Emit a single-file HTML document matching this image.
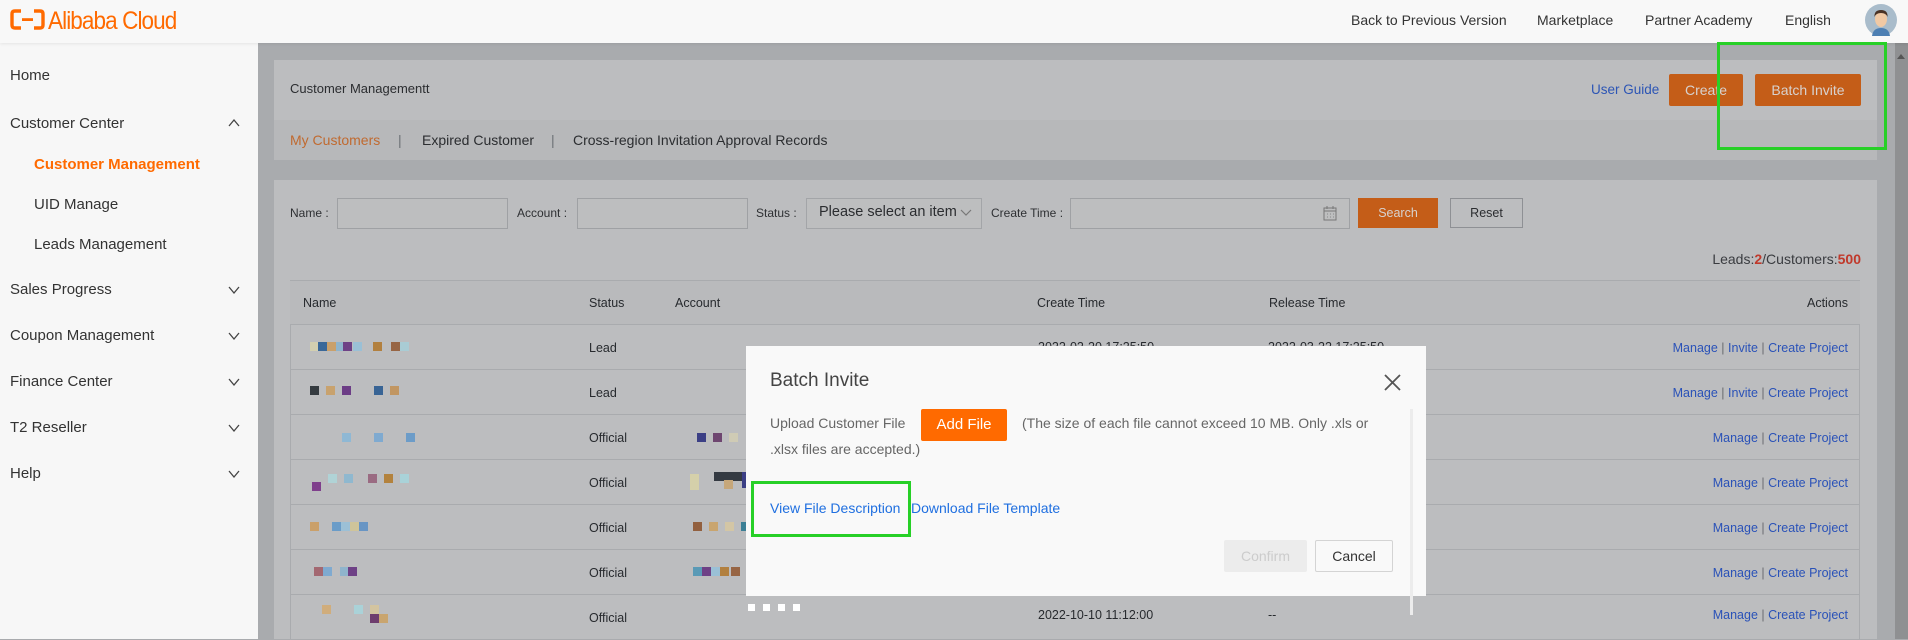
<!DOCTYPE html>
<html><head><meta charset="utf-8">
<style>
*{margin:0;padding:0;box-sizing:border-box}
body{width:1908px;height:639px;overflow:hidden;position:relative;font-family:"Liberation Sans",Arial,sans-serif;background:#a9abae;color:#2b2d30}
.abs{position:absolute}
.hdr{left:0;top:0;width:1908px;height:43px;background:#f8f8f8;box-shadow:0 1px 3px rgba(0,0,0,.08);z-index:2}
.nav{top:12px;font-size:14px;color:#333}
.side{left:0;top:43px;width:258px;height:596px;background:#f7f7f7}
.si{left:10px;font-size:15px;color:#333;line-height:18px}
.sub{left:34px}
.chev{left:228px;width:12px;height:8px}
.panel{background:#bcbdbf}
.t13{font-size:13px}
.inp{background:#bdbebf;border:1px solid #9fa1a4;height:31px;top:198px}
.lbl{top:206px;font-size:12px;color:#2e3033}
.btn{background:#c45d18;color:#d7d2cf;font-size:14px;text-align:center;border-radius:2px}
.row{left:290px;width:1570px;height:45px;border-bottom:1px solid #a9abae}
.cell{font-size:12.5px;color:#272a2e;top:16px}
.act{right:12px;top:16px;font-size:12.5px;color:#2a52b8}
.act span{color:#6a6c70}
.px{position:absolute;width:9px;height:9px}
.modal{left:746px;top:346px;width:680px;height:250px;background:#f9f9f9;z-index:5}
.green{border:3px solid #27d027;z-index:6}
</style></head><body>

<div class="abs hdr">
  <svg class="abs" style="left:10px;top:9px" width="35" height="21" viewBox="0 0 35 21">
    <path d="M11 2H5Q2 2 2 5V16Q2 19 5 19H11" fill="none" stroke="#ff6a00" stroke-width="3.4"/>
    <path d="M24 2H30Q33 2 33 5V16Q33 19 30 19H24" fill="none" stroke="#ff6a00" stroke-width="3.4"/>
    <rect x="12" y="9.2" width="11" height="2.8" fill="#ff6a00"/>
  </svg>
  <div class="abs" style="left:48px;top:7px;font-size:25px;color:#ff6a00;letter-spacing:-1px;transform:scaleX(.9);transform-origin:left">Alibaba Cloud</div>
  <div class="abs nav" style="left:1351px">Back to Previous Version</div>
  <div class="abs nav" style="left:1537px">Marketplace</div>
  <div class="abs nav" style="left:1645px">Partner Academy</div>
  <div class="abs nav" style="left:1785px">English</div>
  <svg class="abs" style="left:1865px;top:4px" width="32" height="32" viewBox="0 0 32 32">
    <circle cx="16" cy="16" r="16" fill="#a9bccb"/>
    <path d="M7 32Q8 24 16 24Q24 24 25 32Z" fill="#4d7fb3"/>
    <ellipse cx="16" cy="15" rx="6" ry="8" fill="#f1c9a4"/>
    <path d="M9.5 13Q9 6 16 6Q23 6 22.5 13Q21 9 16 9Q11 9 9.5 13Z" fill="#4a3326"/>
  </svg>
</div>

<div class="abs side">
  <div class="abs si" style="top:24px">Home</div>
  <div class="abs si" style="top:72px">Customer Center</div>
  <svg class="abs chev" style="top:76px" viewBox="0 0 12 8"><path d="M1 7L6 1L11 7" fill="none" stroke="#444" stroke-width="1.3"/></svg>
  <div class="abs si sub" style="top:113px;color:#ff6a00;font-weight:bold">Customer Management</div>
  <div class="abs si sub" style="top:153px">UID Manage</div>
  <div class="abs si sub" style="top:193px">Leads Management</div>
  <div class="abs si" style="top:238px">Sales Progress</div>
  <div class="abs si" style="top:284px">Coupon Management</div>
  <div class="abs si" style="top:330px">Finance Center</div>
  <div class="abs si" style="top:376px">T2 Reseller</div>
  <div class="abs si" style="top:422px">Help</div>
  <svg class="abs chev" style="top:243px" viewBox="0 0 12 8"><path d="M1 1L6 7L11 1" fill="none" stroke="#444" stroke-width="1.3"/></svg>
  <svg class="abs chev" style="top:289px" viewBox="0 0 12 8"><path d="M1 1L6 7L11 1" fill="none" stroke="#444" stroke-width="1.3"/></svg>
  <svg class="abs chev" style="top:335px" viewBox="0 0 12 8"><path d="M1 1L6 7L11 1" fill="none" stroke="#444" stroke-width="1.3"/></svg>
  <svg class="abs chev" style="top:381px" viewBox="0 0 12 8"><path d="M1 1L6 7L11 1" fill="none" stroke="#444" stroke-width="1.3"/></svg>
  <svg class="abs chev" style="top:427px" viewBox="0 0 12 8"><path d="M1 1L6 7L11 1" fill="none" stroke="#444" stroke-width="1.3"/></svg>
</div>

<!-- top panel -->
<div class="abs panel" style="left:274px;top:60px;width:1603px;height:100px"></div>
<div class="abs" style="left:274px;top:120px;width:1603px;height:40px;background:#b7b8ba"></div>
<div class="abs t13" style="left:290px;top:81px;color:#2b2d30">Customer Managementt</div>
<div class="abs" style="left:290px;top:132px;font-size:14px;color:#c06a30">My Customers</div>
<div class="abs" style="left:398px;top:132px;font-size:14px;color:#6d7075">|</div>
<div class="abs" style="left:422px;top:132px;font-size:14px">Expired Customer</div>
<div class="abs" style="left:551px;top:132px;font-size:14px;color:#6d7075">|</div>
<div class="abs" style="left:573px;top:132px;font-size:14px">Cross-region Invitation Approval Records</div>
<div class="abs" style="left:1591px;top:82px;font-size:13.5px;color:#2c55b5">User Guide</div>
<div class="abs btn" style="left:1669px;top:74px;width:74px;height:32px;line-height:32px">Create</div>
<div class="abs btn" style="left:1755px;top:74px;width:106px;height:32px;line-height:32px">Batch Invite</div>

<!-- scrollbar -->
<div class="abs" style="left:1877px;top:43px;width:18px;height:596px;background:#a9abae"></div>
<div class="abs" style="left:1895px;top:43px;width:13px;height:596px;background:#8f9092"></div>
<div class="abs" style="left:1897px;top:54px;width:0;height:0;border-left:4px solid transparent;border-right:4px solid transparent;border-bottom:5px solid #555"></div>

<!-- main panel -->
<div class="abs panel" style="left:274px;top:180px;width:1603px;height:459px"></div>
<div class="abs lbl" style="left:290px">Name :</div>
<div class="abs inp" style="left:337px;width:171px"></div>
<div class="abs lbl" style="left:517px">Account :</div>
<div class="abs inp" style="left:577px;width:171px"></div>
<div class="abs lbl" style="left:756px">Status :</div>
<div class="abs inp" style="left:806px;width:176px;border-color:#a3a5a8"></div>
<div class="abs" style="left:819px;top:204px;font-size:14.5px;color:#2b2d30">Please select an item</div>
<svg class="abs" style="left:960px;top:209px" width="12" height="8" viewBox="0 0 12 8"><path d="M1 1L6 6L11 1" fill="none" stroke="#777" stroke-width="1.2"/></svg>
<div class="abs lbl" style="left:991px">Create Time :</div>
<div class="abs inp" style="left:1070px;width:280px"></div>
<svg class="abs" style="left:1323px;top:205px" width="14" height="16" viewBox="0 0 14 16"><rect x="1" y="3" width="12" height="12" fill="none" stroke="#777"/><path d="M1 6H13M4 1V4M10 1V4" stroke="#777"/><path d="M4 9H5M7 9H8M10 9H11M4 12H5M7 12H8M10 12H11" stroke="#888"/></svg>
<div class="abs btn" style="left:1358px;top:198px;width:80px;height:30px;line-height:30px;font-size:12.5px;border-radius:0">Search</div>
<div class="abs" style="left:1450px;top:198px;width:73px;height:30px;border:1px solid #8e9094;line-height:28px;text-align:center;font-size:12.5px;color:#2b2d30">Reset</div>
<div class="abs" style="right:47px;top:251px;font-size:14px;color:#3a3c40">Leads:<b style="color:#c0392b">2</b>/Customers:<b style="color:#c0392b">500</b></div>

<!-- table -->
<div class="abs" style="left:290px;top:280px;width:1570px;height:359px;border-left:1px solid #a9abae;border-right:1px solid #a9abae"></div>
<div class="abs row" style="top:280px;border-top:1px solid #a9abae;background:#b9babc">
  <div class="abs cell" style="left:13px;top:15px">Name</div>
  <div class="abs cell" style="left:299px;top:15px">Status</div>
  <div class="abs cell" style="left:385px;top:15px">Account</div>
  <div class="abs cell" style="left:747px;top:15px">Create Time</div>
  <div class="abs cell" style="left:979px;top:15px">Release Time</div>
  <div class="abs cell" style="right:12px;left:auto;top:15px">Actions</div>
</div>

<div class="abs row" style="top:325px">
  <div class="px" style="left:20px;top:17px;background:#d3cfb0"></div><div class="px" style="left:28px;top:17px;background:#3a6899"></div><div class="px" style="left:37px;top:17px;background:#caa06a"></div><div class="px" style="left:46px;top:17px;background:#8fb4cc"></div><div class="px" style="left:53px;top:17px;background:#6e4186"></div><div class="px" style="left:63px;top:17px;background:#9ac0d6"></div><div class="px" style="left:83px;top:17px;background:#b2803f"></div><div class="px" style="left:101px;top:17px;background:#976544"></div><div class="px" style="left:110px;top:17px;background:#a9ccd4"></div>
  <div class="abs cell" style="left:299px">Lead</div>
  <div class="abs cell" style="left:748px;top:15px">2022-02-20 17:25:50</div>
  <div class="abs cell" style="left:978px;top:15px">2022-03-22 17:25:50</div>
  <div class="act abs">Manage <span>|</span> Invite <span>|</span> Create Project</div>
</div>
<div class="abs row" style="top:370px">
  <div class="px" style="left:20px;top:16px;background:#353b40"></div><div class="px" style="left:36px;top:16px;background:#c8a26e"></div><div class="px" style="left:52px;top:16px;background:#6c3d86"></div><div class="px" style="left:84px;top:16px;background:#386495"></div><div class="px" style="left:100px;top:16px;background:#c19662"></div>
  <div class="abs cell" style="left:299px">Lead</div>
  <div class="act abs">Manage <span>|</span> Invite <span>|</span> Create Project</div>
</div>
<div class="abs row" style="top:415px">
  <div class="px" style="left:52px;top:18px;background:#8fb8d4"></div><div class="px" style="left:84px;top:18px;background:#7faad0"></div><div class="px" style="left:116px;top:18px;background:#6c9cc8"></div>
  <div class="abs cell" style="left:299px">Official</div>
  <div class="px" style="left:407px;top:18px;background:#3b3f85"></div><div class="px" style="left:423px;top:18px;background:#6e4670"></div><div class="px" style="left:439px;top:18px;background:#cfcbb5"></div>
  <div class="act abs">Manage <span>|</span> Create Project</div>
</div>
<div class="abs row" style="top:460px">
  <div class="px" style="left:22px;top:22px;background:#7f3f8c"></div><div class="px" style="left:38px;top:14px;background:#b0d3d6"></div><div class="px" style="left:54px;top:14px;background:#8fb8cf"></div><div class="px" style="left:78px;top:14px;background:#9a6b82"></div><div class="px" style="left:94px;top:14px;background:#b3823d"></div><div class="px" style="left:110px;top:14px;background:#a9d2d8"></div>
  <div class="abs cell" style="left:299px">Official</div>
  <div class="px" style="left:400px;top:14px;background:#d5d0aa;height:16px"></div><div class="px" style="left:424px;top:12px;width:28px;background:#343a42"></div><div class="px" style="left:434px;top:20px;background:#c6a77a"></div><div class="px" style="left:452px;top:12px;height:16px;background:#3b3f85"></div><div class="px" style="left:460px;top:12px;background:#7faad0"></div>
  <div class="act abs">Manage <span>|</span> Create Project</div>
</div>
<div class="abs row" style="top:505px">
  <div class="px" style="left:20px;top:17px;background:#caa06a"></div><div class="px" style="left:42px;top:17px;background:#6a9cc8"></div><div class="px" style="left:51px;top:17px;background:#9cc0d6"></div><div class="px" style="left:60px;top:17px;background:#cfc49a"></div><div class="px" style="left:69px;top:17px;background:#6895c4"></div>
  <div class="abs cell" style="left:299px">Official</div>
  <div class="px" style="left:403px;top:17px;background:#92603f"></div><div class="px" style="left:419px;top:17px;background:#c9a56f"></div><div class="px" style="left:435px;top:17px;background:#d3c6a5"></div><div class="px" style="left:451px;top:17px;background:#3b7f95"></div>
  <div class="act abs">Manage <span>|</span> Create Project</div>
</div>
<div class="abs row" style="top:550px">
  <div class="px" style="left:24px;top:17px;background:#a36871"></div><div class="px" style="left:33px;top:17px;background:#7faad0"></div><div class="px" style="left:50px;top:17px;background:#8fb4cc"></div><div class="px" style="left:58px;top:17px;background:#6e4186"></div>
  <div class="abs cell" style="left:299px">Official</div>
  <div class="px" style="left:403px;top:17px;background:#5a9ab6"></div><div class="px" style="left:412px;top:17px;background:#6e4186"></div><div class="px" style="left:421px;top:17px;background:#9ac0d6"></div><div class="px" style="left:430px;top:17px;background:#b2803f"></div><div class="px" style="left:441px;top:17px;background:#976544"></div>
  <div class="act abs">Manage <span>|</span> Create Project</div>
</div>
<div class="abs row" style="top:595px">
  <div class="px" style="left:32px;top:10px;background:#d0ad7c"></div><div class="px" style="left:64px;top:10px;background:#aad2d8"></div><div class="px" style="left:80px;top:10px;background:#d3c4a0"></div><div class="px" style="left:80px;top:19px;background:#6e3d6e"></div><div class="px" style="left:89px;top:19px;background:#c9a56f"></div>
  <div class="abs cell" style="left:299px">Official</div>
  <div class="px" style="left:458px;top:9px;background:#fff;width:7px;height:7px"></div><div class="px" style="left:473px;top:9px;background:#fff;width:7px;height:7px"></div><div class="px" style="left:488px;top:9px;background:#fff;width:7px;height:7px"></div><div class="px" style="left:503px;top:9px;background:#fff;width:7px;height:7px"></div>
  <div class="abs cell" style="left:748px;top:13px">2022-10-10 11:12:00</div>
  <div class="abs cell" style="left:978px;top:13px">--</div>
  <div class="act abs" style="top:13px">Manage <span>|</span> Create Project</div>
</div>

<!-- green highlight top -->
<div class="abs green" style="left:1717px;top:42px;width:170px;height:108px"></div>

<!-- modal -->
<div class="abs modal">
  <div class="abs" style="left:24px;top:24px;font-size:19px;color:#444">Batch Invite</div>
  <svg class="abs" style="left:638px;top:28px" width="17" height="17" viewBox="0 0 17 17"><path d="M1 1L16 16M16 1L1 16" stroke="#555" stroke-width="1.8"/></svg>
  <div class="abs" style="left:24px;top:69px;font-size:14px;color:#666">Upload Customer File</div>
  <div class="abs" style="left:175px;top:63px;width:86px;height:32px;background:#ff6a00;color:#fff;font-size:15px;line-height:32px;text-align:center;border-radius:2px">Add File</div>
  <div class="abs" style="left:276px;top:69px;font-size:14px;color:#666;white-space:nowrap">(The size of each file cannot exceed 10 MB. Only .xls or</div>
  <div class="abs" style="left:24px;top:95px;font-size:14px;color:#666">.xlsx files are accepted.)</div>
  <div class="abs" style="left:24px;top:154px;font-size:14px;color:#1f6fe0">View File Description</div>
  <div class="abs" style="left:165px;top:154px;font-size:14px;color:#1f6fe0">Download File Template</div>
  <div class="abs" style="left:478px;top:194px;width:83px;height:32px;background:#ececec;border-radius:2px;color:#ccc;font-size:14px;text-align:center;line-height:32px">Confirm</div>
  <div class="abs" style="left:569px;top:194px;width:78px;height:32px;border:1px solid #d4d4d4;color:#333;font-size:14px;text-align:center;line-height:30px;border-radius:2px">Cancel</div>
  <div class="abs" style="left:664px;top:63px;width:3px;height:206px;background:#ececec"></div>
</div>
<div class="abs" style="left:1410px;top:596px;width:3px;height:19px;background:#ececec;z-index:5"></div>
<div class="abs green" style="left:751px;top:481px;width:160px;height:56px"></div>

</body></html>
